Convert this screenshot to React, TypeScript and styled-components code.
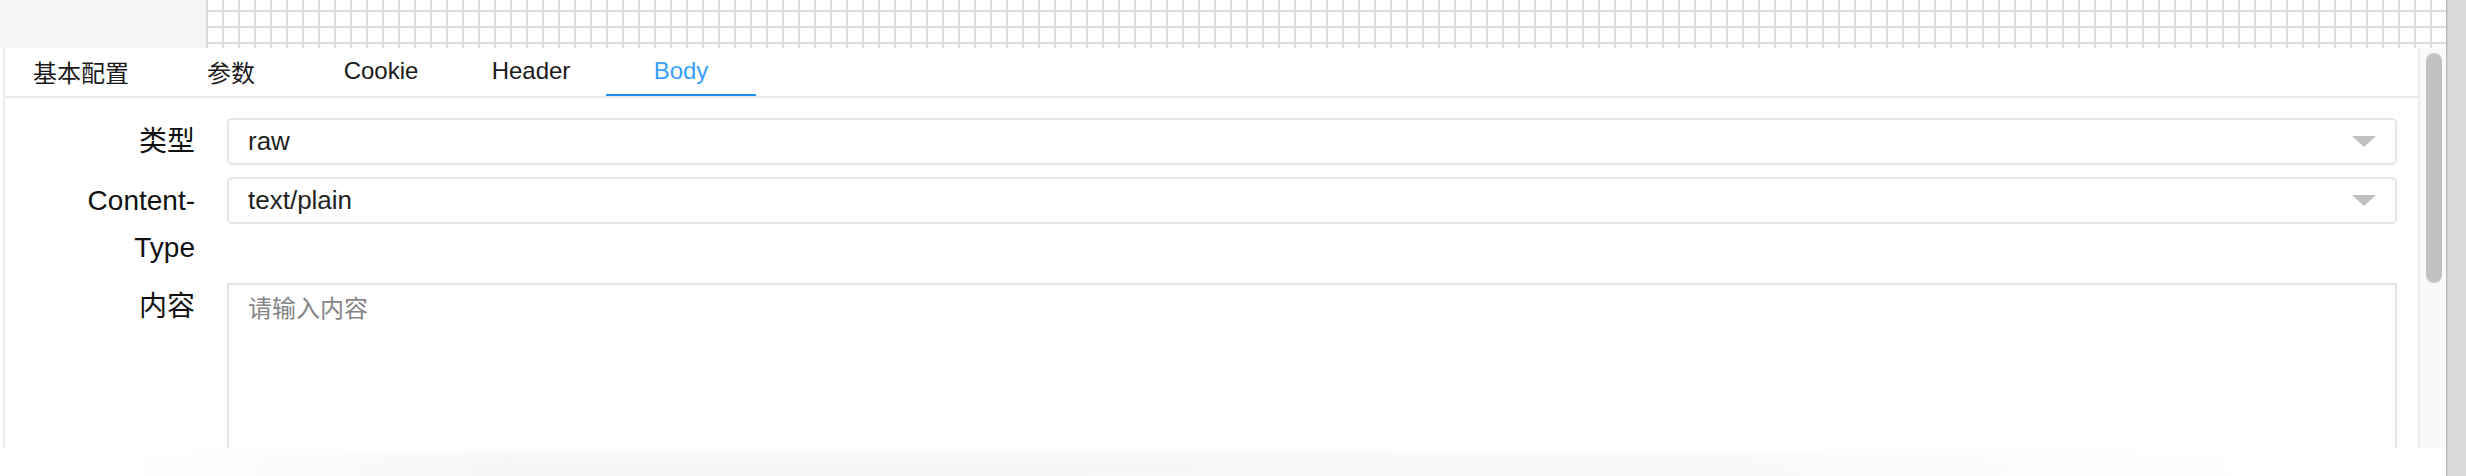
import React from "react";
import styled, { createGlobalStyle } from "styled-components";

const GlobalStyle = createGlobalStyle`
  html, body {
    margin: 0;
    padding: 0;
    background: #ffffff;
    overflow: hidden;
  }
  body {
    font-family: "Liberation Sans", "Noto Sans CJK SC", sans-serif;
    color: #1a1a1a;
  }
  * { box-sizing: border-box; }
`;

const Screen = styled.div`
  display: flex;
  width: 2466px;
  height: 476px;
  background: #ffffff;
`;

const Main = styled.div`
  display: flex;
  flex-direction: column;
  flex: 1;
  min-width: 0;
`;

const TopStrip = styled.div`
  display: flex;
  height: 48px;
  flex-shrink: 0;
`;

const SideStub = styled.div`
  width: 206px;
  background: #f5f5f5;
`;

const GridCanvas = styled.div`
  flex: 1;
  background-color: #ffffff;
  background-image:
    linear-gradient(to right, #dcdcdc 2px, transparent 2px),
    linear-gradient(to bottom, #dcdcdc 2px, transparent 2px);
  background-size: 16px 16px;
  background-position: 0 10px;
`;

const Panel = styled.div`
  display: flex;
  height: 400px;
  margin-left: 3px;
  overflow: hidden;
  flex-shrink: 0;
`;

const Content = styled.div`
  flex: 1;
  display: flex;
  flex-direction: column;
  border-left: 2px solid #ececec;
  min-width: 0;
`;

const TabBar = styled.div`
  display: flex;
  height: 50px;
  padding-left: 1px;
  border-bottom: 2px solid #e8e8e8;
`;

const Tab = styled.div<{ $active?: boolean }>`
  width: 150px;
  height: 48px;
  display: flex;
  align-items: center;
  justify-content: center;
  font-size: 24px;
  color: ${(p) => (p.$active ? "#3ba0ff" : "#1a1a1a")};
  border-bottom: 2px solid ${(p) => (p.$active ? "#1f8fff" : "transparent")};
`;

const Form = styled.div`
  display: flex;
  flex-direction: column;
  gap: 12px;
  padding: 20px 21px 0 0;
`;

const Field = styled.div`
  display: grid;
  grid-template-columns: 190px 1fr;
  column-gap: 32px;
  align-items: start;
`;

const Label = styled.div`
  padding-left: 40px;
  font-size: 28px;
  line-height: 47px;
  text-align: right;
  color: #111;
`;

const Select = styled.div`
  height: 47px;
  display: flex;
  align-items: center;
  justify-content: space-between;
  padding: 0 19px;
  border: 2px solid #e6e6e6;
  border-radius: 5px;
  font-size: 26px;
  color: #1f1f1f;
  background: #fff;
`;

const Caret = styled.span`
  width: 0;
  height: 0;
  border-left: 12px solid transparent;
  border-right: 12px solid transparent;
  border-top: 11px solid #c0c0c0;
`;

const TextArea = styled.textarea`
  display: block;
  width: 100%;
  height: 320px;
  padding: 8px 19px;
  border: 2px solid #e4e4e4;
  border-radius: 0;
  font-family: "Liberation Sans", "Noto Sans CJK SC", sans-serif;
  font-size: 24px;
  line-height: 32px;
  color: #1f1f1f;
  resize: none;
  outline: none;
  &::placeholder {
    color: #858585;
  }
`;

const ScrollTrack = styled.div`
  width: 28px;
  flex-shrink: 0;
  border-left: 2px solid #ececec;
  background: #f9f9f9;
  padding: 5px 0 0 6px;
`;

const Thumb = styled.div`
  width: 16px;
  height: 230px;
  border-radius: 8px;
  background: #c1c1c1;
`;

const BottomShade = styled.div`
  flex: 1;
  background:
    linear-gradient(to bottom, rgba(255,255,255,0.9) 0, rgba(255,255,255,0) 12px),
    linear-gradient(to right, #ffffff 110px, #f6f6f6 500px, #f7f7f7 1600px, #ffffff 2300px);
`;

const WindowEdge = styled.div`
  width: 20px;
  flex-shrink: 0;
  background: linear-gradient(to right, #a9a9a9 0, #c9c9c9 1px, #dcdcdc 3px, #d9d9d9 100%);
`;

const tabs = ["基本配置", "参数", "Cookie", "Header", "Body"];

export default function App() {
  return (
    <>
      <GlobalStyle />
      <Screen>
        <Main>
          <TopStrip>
            <SideStub />
            <GridCanvas />
          </TopStrip>
          <Panel>
            <Content>
              <TabBar>
                {tabs.map((t) => (
                  <Tab key={t} $active={t === "Body"}>
                    {t}
                  </Tab>
                ))}
              </TabBar>
              <Form>
                <Field>
                  <Label>类型</Label>
                  <Select>
                    <span>raw</span>
                    <Caret />
                  </Select>
                </Field>
                <Field>
                  <Label>Content-Type</Label>
                  <Select>
                    <span>text/plain</span>
                    <Caret />
                  </Select>
                </Field>
                <Field>
                  <Label>内容</Label>
                  <TextArea placeholder="请输入内容" />
                </Field>
              </Form>
            </Content>
            <ScrollTrack>
              <Thumb />
            </ScrollTrack>
          </Panel>
          <BottomShade />
        </Main>
        <WindowEdge />
      </Screen>
    </>
  );
}
